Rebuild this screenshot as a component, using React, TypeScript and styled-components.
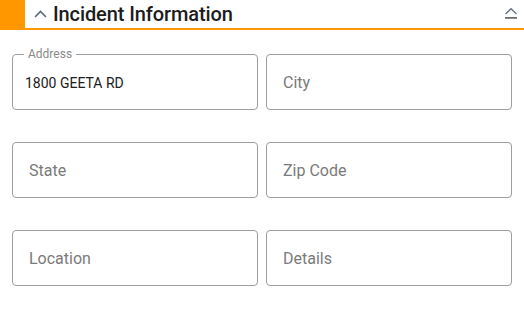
import React, { FC } from 'react';
import styled, { createGlobalStyle } from 'styled-components';

const GlobalStyle = createGlobalStyle`
  html, body {
    margin: 0;
    padding: 0;
    background: #fff;
    font-family: Roboto, "Noto Sans", sans-serif;
  }
`;

const Panel = styled.div`
  width: 524px;
  height: 310px;
  background: #fff;
`;

const Header = styled.div`
  display: flex;
  align-items: stretch;
  height: 28px;
  border-bottom: 2px solid #ff9800;
  box-sizing: content-box;
`;

const Accent = styled.div`
  width: 25px;
  flex-shrink: 0;
  background: #ff9800;
`;

const Title = styled.div`
  display: flex;
  align-items: center;
  flex: 1;
  padding-left: 9px;
  gap: 6px;
  font-size: 20px;
  font-weight: 500;
  color: #1c1c1c;
  letter-spacing: -0.1px;
`;

const Collapse = styled.div`
  display: flex;
  align-items: center;
  padding-right: 6px;
`;

const Grid = styled.div`
  display: grid;
  grid-template-columns: 1fr 1fr;
  column-gap: 8px;
  row-gap: 32px;
  padding: 24px 12px 0 12px;
`;

const Field = styled.fieldset<{ $filled?: boolean }>`
  position: relative;
  margin: 0;
  height: 56px;
  box-sizing: border-box;
  border: 1px solid #9e9e9e;
  border-radius: 4px;
  padding: 0 ${p => (p.$filled ? '12px' : '16px')};
  display: flex;
  align-items: center;
  min-width: 0;
`;

const Legend = styled.legend`
  position: absolute;
  top: -7px;
  left: 11px;
  padding: 0 4px;
  background: #fff;
  font-size: 12px;
  line-height: 12px;
  color: #8a8a8a;
`;

const Value = styled.span<{ $placeholder?: boolean }>`
  font-size: ${p => (p.$placeholder ? '16px' : '14px')};
  color: ${p => (p.$placeholder ? '#7a7a7a' : '#202020')};
  padding-top: ${p => (p.$placeholder ? '0' : '1px')};
`;

const Caret: FC = () => (
  <svg width="13" height="8" viewBox="0 0 13 8">
    <path d="M1 7 L6.5 1.5 L12 7" fill="none" stroke="#5a6b80" strokeWidth="1.6" />
  </svg>
);

const CollapseIcon: FC = () => (
  <svg width="14" height="14" viewBox="0 0 14 14">
    <path d="M1.5 7 L7 1.8 L12.5 7" fill="none" stroke="#6a7585" strokeWidth="1.5" />
    <rect x="1" y="10" width="12" height="1.8" fill="#6f6f6f" />
  </svg>
);

type TField = { label: string; value?: string };

const fields: TField[] = [
  { label: 'Address', value: '1800 GEETA RD' },
  { label: 'City' },
  { label: 'State' },
  { label: 'Zip Code' },
  { label: 'Location' },
  { label: 'Details' },
];

const App: FC = () => {
  return (
    <Panel>
      <GlobalStyle />
      <Header>
        <Accent />
        <Title>
          <Caret />
          Incident Information
        </Title>
        <Collapse>
          <CollapseIcon />
        </Collapse>
      </Header>
      <Grid>
        {fields.map(f =>
          f.value ? (
            <Field key={f.label} $filled>
              <Legend>{f.label}</Legend>
              <Value>{f.value}</Value>
            </Field>
          ) : (
            <Field key={f.label}>
              <Value $placeholder>{f.label}</Value>
            </Field>
          )
        )}
      </Grid>
    </Panel>
  );
};

export default App;
